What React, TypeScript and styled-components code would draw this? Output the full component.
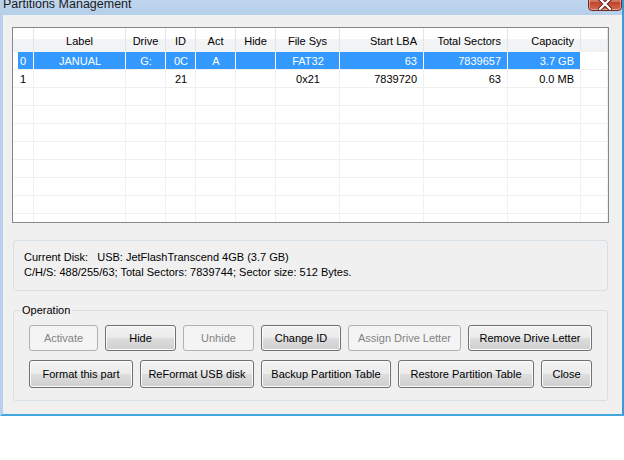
import React from "react";
import styled, { createGlobalStyle } from "styled-components";

const GlobalStyle = createGlobalStyle`
  html, body {
    margin: 0;
    padding: 0;
    background: #ffffff;
  }
  body {
    font-family: "Liberation Sans", Arial, sans-serif;
    font-size: 11px;
    color: #000;
  }
  * {
    box-sizing: border-box;
  }
`;

const COLS = "21px 92px 40px 30px 40px 40px 64px 84px 84px 73px 1fr";

type Align = "left" | "center" | "right";

const Window = styled.div`
  width: 624px;
  height: 416px;
  display: flex;
  flex-direction: column;
  border-left: 3px solid #b7d0ec;
  border-right: 2px solid #3b9ad8;
  border-bottom: 2px solid #41a6dc;
  background: #f0f0f0;
`;

const TitleBar = styled.div`
  height: 15px;
  flex: none;
  display: flex;
  justify-content: space-between;
  align-items: flex-start;
  overflow: hidden;
  background: linear-gradient(#bfd6ee, #b6cfea);
`;

const TitleText = styled.div`
  font-family: "Liberation Sans", Arial, sans-serif;
  font-size: 12.5px;
  line-height: 14px;
  margin-top: -3px;
  color: #1b1b1b;
`;

const CloseButton = styled.div`
  width: 34px;
  height: 19px;
  margin-top: -8px;
  display: flex;
  align-items: center;
  justify-content: center;
  border: 1px solid #6e2a24;
  border-radius: 0 0 4px 4px;
  background: linear-gradient(#e4a89b, #d0705e 50%, #c1402b 51%, #d06a4d);
  box-shadow: inset 0 0 0 1px rgba(255, 220, 210, 0.5);
`;

const Client = styled.div`
  flex: 1;
  display: flex;
  flex-direction: column;
  padding: 12px 13px 0 9px;
  background: #f0f0f0;
`;

const ListView = styled.div`
  height: 196px;
  flex: none;
  border: 1px solid #828790;
  background: #fff;
  overflow: hidden;
`;

const HeaderRow = styled.div`
  display: grid;
  grid-template-columns: ${COLS};
  height: 24px;
  background: linear-gradient(#ffffff 0%, #ffffff 45%, #f3f4f6 46%, #f1f2f4 100%);
`;

const HeaderCell = styled.div<{ $align: Align }>`
  display: flex;
  align-items: center;
  padding: 2px 6px 0 6px;
  justify-content: ${({ $align }) =>
    $align === "left" ? "flex-start" : $align === "right" ? "flex-end" : "center"};
  border-right: 1px solid #e5e5e5;
  white-space: nowrap;
  overflow: hidden;
`;

const Row = styled.div`
  display: grid;
  grid-template-columns: ${COLS};
  height: 18px;
`;

const Cell = styled.div<{ $align: Align; $selected?: boolean; $first?: boolean }>`
  display: flex;
  align-items: center;
  padding: 0 6px 0 7px;
  justify-content: ${({ $align }) =>
    $align === "left" ? "flex-start" : $align === "right" ? "flex-end" : "center"};
  border-right: 1px solid ${({ $selected }) => ($selected ? "#ffffff" : "#f0f0f0")};
  border-bottom: 1px solid #f0f0f0;
  white-space: nowrap;
  overflow: hidden;
  color: ${({ $selected }) => ($selected ? "#ffffff" : "#000000")};
  background: ${({ $selected, $first }) =>
    !$selected
      ? "#ffffff"
      : $first
      ? "linear-gradient(90deg, #ffffff 5px, #3399ff 5px)"
      : "#3399ff"};
`;

const InfoPanel = styled.div`
  margin: 17px 1px 0 1px;
  height: 51px;
  padding: 9px 10px 0 10px;
  border: 1px solid #d5dfe5;
  border-radius: 3px;
  line-height: 15px;
`;

const InfoLine = styled.div`
  white-space: nowrap;
`;

const InfoLabel = styled.span`
  display: inline-block;
  margin-right: 9px;
`;

const GroupBox = styled.div`
  position: relative;
  margin: 19px 1px 0 1px;
  height: 91px;
  padding: 14px 15px 0 15px;
  border: 1px solid #d5dfe5;
  border-radius: 3px;
  display: flex;
  flex-direction: column;
  gap: 9px;
`;

const GroupLabel = styled.span`
  position: absolute;
  left: 7px;
  top: -7px;
  padding: 0 2px 0 1px;
  line-height: 13px;
  background: #f0f0f0;
`;

const ButtonRow = styled.div<{ $h: number }>`
  display: flex;
  gap: 7px;
  height: ${({ $h }) => $h}px;
`;

const Button = styled.button<{ $w: number }>`
  width: ${({ $w }) => $w}px;
  height: 100%;
  padding: 0;
  font-family: "Liberation Sans", Arial, sans-serif;
  font-size: 11px;
  color: #000;
  border: 1px solid #707070;
  border-radius: 3px;
  background: linear-gradient(#f2f2f2 0%, #ebebeb 50%, #dddddd 51%, #cfcfcf 100%);
  box-shadow: inset 0 0 0 1px #fbfbfb;

  &:disabled {
    color: #838383;
    border-color: #adb2b5;
    background: #f4f4f4;
    box-shadow: none;
  }
`;

const headers: { text: string; align: Align }[] = [
  { text: "", align: "left" },
  { text: "Label", align: "center" },
  { text: "Drive", align: "center" },
  { text: "ID", align: "center" },
  { text: "Act", align: "center" },
  { text: "Hide", align: "center" },
  { text: "File Sys", align: "center" },
  { text: "Start LBA", align: "right" },
  { text: "Total Sectors", align: "right" },
  { text: "Capacity", align: "right" },
  { text: "", align: "left" },
];

const rows: string[][] = [
  ["0", "JANUAL", "G:", "0C", "A", "", "FAT32", "63", "7839657", "3.7 GB"],
  ["1", "", "", "21", "", "", "0x21", "7839720", "63", "0.0 MB"],
];

const emptyRow = ["", "", "", "", "", "", "", "", "", ""];
while (rows.length < 10) rows.push(emptyRow);

const topButtons = [
  { label: "Activate", w: 69, disabled: true },
  { label: "Hide", w: 71 },
  { label: "Unhide", w: 71, disabled: true },
  { label: "Change ID", w: 80 },
  { label: "Assign Drive Letter", w: 113, disabled: true },
  { label: "Remove Drive Letter", w: 124 },
];

const bottomButtons = [
  { label: "Format this part", w: 104 },
  { label: "ReFormat USB disk", w: 114 },
  { label: "Backup Partition Table", w: 130 },
  { label: "Restore Partition Table", w: 136 },
  { label: "Close", w: 51 },
];

function CloseIcon() {
  return (
    <svg width="14" height="12" viewBox="0 0 14 12" style={{ marginTop: 5 }}>
      <path
        d="M2 1 L12 11 M12 1 L2 11"
        stroke="#5a1f1a"
        strokeWidth="4"
        strokeLinecap="square"
      />
      <path
        d="M2 1 L12 11 M12 1 L2 11"
        stroke="#ffffff"
        strokeWidth="2.2"
        strokeLinecap="square"
      />
    </svg>
  );
}

export default function App() {
  return (
    <>
      <GlobalStyle />
      <Window>
        <TitleBar>
          <TitleText>Partitions Management</TitleText>
          <CloseButton>
            <CloseIcon />
          </CloseButton>
        </TitleBar>
        <Client>
          <ListView>
            <HeaderRow>
              {headers.map((h, i) => (
                <HeaderCell key={i} $align={h.align}>
                  {h.text}
                </HeaderCell>
              ))}
            </HeaderRow>
            {rows.map((r, ri) => {
              const selected = ri === 0;
              return (
                <Row key={ri}>
                  {r.map((v, ci) => (
                    <Cell
                      key={ci}
                      $align={headers[ci].align}
                      $selected={selected}
                      $first={ci === 0}
                    >
                      {v}
                    </Cell>
                  ))}
                  <Cell $align="left" />
                </Row>
              );
            })}
          </ListView>

          <InfoPanel>
            <InfoLine>
              <InfoLabel>Current Disk:</InfoLabel>
              USB: JetFlashTranscend 4GB (3.7 GB)
            </InfoLine>
            <InfoLine>
              C/H/S: 488/255/63; Total Sectors: 7839744; Sector size: 512 Bytes.
            </InfoLine>
          </InfoPanel>

          <GroupBox>
            <GroupLabel>Operation</GroupLabel>
            <ButtonRow $h={26}>
              {topButtons.map((b) => (
                <Button key={b.label} $w={b.w} disabled={b.disabled}>
                  {b.label}
                </Button>
              ))}
            </ButtonRow>
            <ButtonRow $h={28}>
              {bottomButtons.map((b) => (
                <Button key={b.label} $w={b.w}>
                  {b.label}
                </Button>
              ))}
            </ButtonRow>
          </GroupBox>
        </Client>
      </Window>
    </>
  );
}
